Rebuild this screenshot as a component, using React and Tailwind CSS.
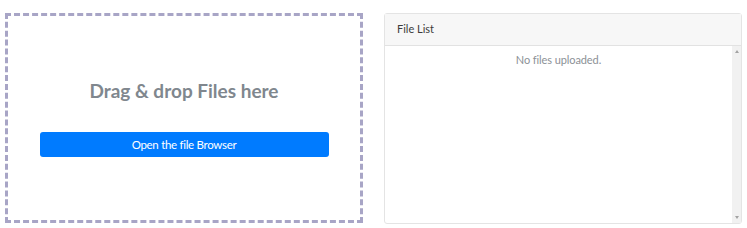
import React from 'react';

const FileUploader = () => {
  return (
    <div className="w-[747px] h-[228px] bg-white flex gap-[21px] pl-[5px] pt-[13px] font-['Lato',sans-serif]">
      <div className="w-[358px] h-[210px] border-[3px] border-dashed border-[#a8a5c6] flex flex-col items-center justify-center">
        <h3 className="text-[19px] font-bold text-[#80878e] mb-[27px] mt-[-2px]">Drag &amp; drop Files here</h3>
        <button className="w-[289px] h-[25px] bg-[#007bff] rounded-[3px] text-white text-[11.5px] tracking-[-0.3px] leading-none">
          Open the file Browser
        </button>
      </div>

      <div className="w-[358px] h-[211px] border border-[#e4e4e4] rounded-[3px] flex flex-col">
        <div className="h-[32px] bg-[#f7f7f7] border-b border-[#e2e2e2] flex items-center px-[12px] text-[11px] text-[#3c3c3c]">
          File List
        </div>
        <div className="flex-1 flex">
          <div className="flex-1 text-center text-[11px] tracking-[-0.1px] text-[#8c9196] pt-[6px]">No files uploaded.</div>
          <div className="w-[9px] bg-[#f1f1f1] flex flex-col justify-between items-center py-[4px]">
            <div className="w-0 h-0 border-l-[2px] border-r-[2px] border-b-[3px] border-l-transparent border-r-transparent border-b-[#a3a3a3]" />
            <div className="w-0 h-0 border-l-[2px] border-r-[2px] border-t-[3px] border-l-transparent border-r-transparent border-t-[#a3a3a3]" />
          </div>
        </div>
      </div>
    </div>
  );
};

export default FileUploader;
